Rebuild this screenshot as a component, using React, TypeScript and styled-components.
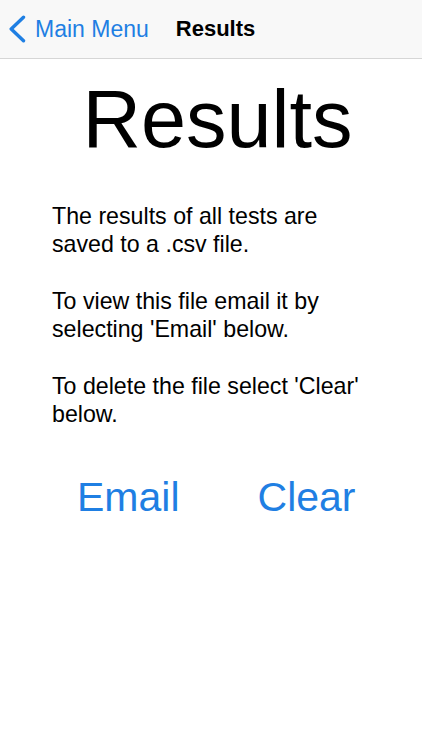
import React from "react";
import styled, { createGlobalStyle } from "styled-components";

const Global = createGlobalStyle`
  html, body { margin: 0; padding: 0; background: #ffffff; }
  body { font-family: "Liberation Sans", Arial, Helvetica, sans-serif; }
`;

const Page = styled.div`
  width: 422px;
  min-height: 750px;
  background: #ffffff;
  display: flex;
  flex-direction: column;
`;

const NavBar = styled.header`
  height: 58px;
  background: #f8f8f8;
  border-bottom: 1px solid #d6d6d6;
  display: flex;
  align-items: center;
  padding-left: 8px;
`;

const BackButton = styled.button`
  display: flex;
  align-items: center;
  gap: 9px;
  border: 0;
  background: none;
  padding: 0;
  margin: 0;
  color: #1f7fe3;
  font-family: "Liberation Sans", Arial, sans-serif;
  font-size: 23px;
  cursor: pointer;
`;

const NavTitle = styled.div`
  margin-left: 27px;
  font-size: 22px;
  font-weight: bold;
  color: #000;
`;

const Heading = styled.h1`
  margin: 20px 0 0 0;
  padding-left: 13px;
  text-align: center;
  font-size: 81px;
  line-height: 81px;
  font-weight: normal;
  color: #000;
`;

const Body = styled.div`
  margin-top: 42px;
  padding: 0 52px;
  display: flex;
  flex-direction: column;
  gap: 29px;
`;

const Para = styled.p`
  margin: 0;
  font-size: 23.2px;
  line-height: 28px;
  color: #000;
`;

const Actions = styled.div`
  margin-top: 49px;
  display: flex;
  padding-left: 77px;
  gap: 78px;
`;

const ActionButton = styled.button`
  border: 0;
  background: none;
  padding: 0;
  margin: 0;
  font-family: "Liberation Sans", Arial, sans-serif;
  font-size: 41px;
  line-height: 41px;
  color: #1f7fe3;
  cursor: pointer;
`;

const Chevron = () => (
  <svg width="18" height="28" viewBox="0 0 18 28" aria-hidden="true">
    <polyline
      points="15.5,2.2 3.2,14 15.5,25.8"
      fill="none"
      stroke="#1f7fe3"
      strokeWidth="3.4"
      strokeLinecap="round"
      strokeLinejoin="round"
    />
  </svg>
);

export default function App() {
  return (
    <>
      <Global />
      <Page>
        <NavBar>
          <BackButton>
            <Chevron />
            Main Menu
          </BackButton>
          <NavTitle>Results</NavTitle>
        </NavBar>
        <Heading>Results</Heading>
        <Body>
          <Para>The results of all tests are saved to a .csv file.</Para>
          <Para>To view this file email it by selecting 'Email' below.</Para>
          <Para>To delete the file select 'Clear' below.</Para>
        </Body>
        <Actions>
          <ActionButton>Email</ActionButton>
          <ActionButton>Clear</ActionButton>
        </Actions>
      </Page>
    </>
  );
}
